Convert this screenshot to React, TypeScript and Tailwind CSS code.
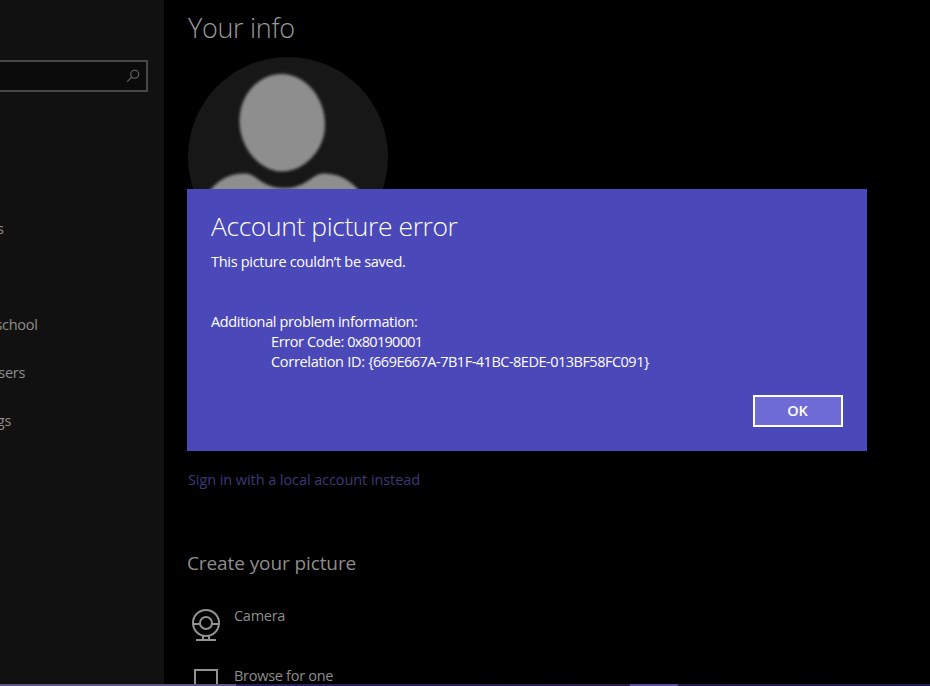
import type { ReactNode } from "react";

// Right edge of each label; the window is scrolled off to the left, so labels are cut there.
const NAV_ITEMS = [
  { label: "s", width: "w-[3.500px]", gap: "mb-[72px]" },
  { label: "school", width: "w-[37.500px]", gap: "mb-6" },
  { label: "sers", width: "w-[25px]", gap: "mb-6" },
  { label: "gs", width: "w-[11px]", gap: "" },
];

function SearchIcon() {
  return (
    <svg width="14" height="14" viewBox="0 0 14 14" fill="none" stroke="#6b6b6b" strokeWidth="1.1">
      <circle cx="8.7" cy="5.2" r="4" />
      <path d="M5.800 8.100 1.200 12.700" />
    </svg>
  );
}

function WebcamIcon() {
  return (
    <svg width="28" height="33" viewBox="0 0 28 33" fill="none" stroke="#929292" strokeWidth="2">
      <circle cx="14" cy="14" r="13" />
      <circle cx="14" cy="14" r="6" />
      <path d="M1 15h7M20 15h7M11 27v4M17 27v4M4 31h20" />
    </svg>
  );
}

function Avatar() {
  return (
    <svg width="200" height="200" viewBox="0 0 200 200" className="block">
      <defs>
        <filter id="soft">
          <feGaussianBlur stdDeviation="1.8" />
        </filter>
        <clipPath id="disc">
          <circle cx="100" cy="100" r="100" />
        </clipPath>
      </defs>
      <circle cx="100" cy="100" r="100" fill="#171717" />
      <g clipPath="url(#disc)">
        <g filter="url(#soft)" fill="#8e8e8e">
          <path d="M94 17C115 17 137 38 137 68C137 94 115 114.500 94 114.500C73 114.500 51.500 92 51.500 64C51.500 37 71 17 94 17Z" />
          <path d="M8 160C16 140 27 116.500 57 116.500C69 116.500 73 131 96 131C119 131 124 116.500 136 116.500C157 116.500 173 130 188 160V200H8Z" />
        </g>
      </g>
    </svg>
  );
}

function Sidebar() {
  return (
    <aside className="w-[164px] shrink-0 bg-[#111111] pt-[60px]">
      <div className="flex h-8 w-[148px] items-center justify-end border-y-2 border-r-2 border-[#484848] bg-[#0b0b0b] pr-[6px]">
        <SearchIcon />
      </div>
      <nav className="mt-[125px] flex flex-col text-[14.500px] leading-6 text-[#8d8d8d]">
        {NAV_ITEMS.map((item) => (
          <div key={item.label} className={`${item.width} ${item.gap} flex justify-end overflow-hidden`}>
            <span className="tracking-[-0.3px]">{item.label}</span>
          </div>
        ))}
      </nav>
    </aside>
  );
}

function PictureSource({ icon, children }: { icon: ReactNode; children: ReactNode }) {
  return (
    <div className="flex h-[60px] text-[14.500px] leading-5 text-[#8d8d8d]">
      <div className="flex w-[46px] shrink-0 pl-1 pt-[3px]">{icon}</div>
      <span className="whitespace-nowrap tracking-[-0.28px]">{children}</span>
    </div>
  );
}

function ErrorDialog() {
  return (
    <div
      role="dialog"
      className="absolute left-[187px] top-[189px] flex h-[262px] w-[680px] flex-col bg-[#4b48b9] px-6 pb-6 pt-[19px] text-white"
    >
      <h2 className="whitespace-nowrap text-[26.500px] font-light leading-9 tracking-[-0.42px]">
        Account picture error
      </h2>
      <div className="mt-[8px] whitespace-nowrap text-[14.500px] leading-5">
        <p className="tracking-[-0.3px]">This picture couldn’t be saved.</p>
        <p className="mt-10 tracking-[-0.36px]">Additional problem information:</p>
        <p className="pl-[60px] tracking-[-0.7px]">
          <span className="tracking-[-0.38px]">Error Code: </span>0x80190001
        </p>
        <p className="pl-[60px] tracking-[-0.5px]">
          <span className="tracking-[-0.3px]">Correlation ID: </span>
          {"{669E667A-7B1F-41BC-8EDE-013BF58FC091}"}
        </p>
      </div>
      <button className="mt-auto h-8 w-[90px] self-end border-2 border-white bg-[#6e6bd6] pr-px text-[14.500px] font-semibold leading-7 tracking-[-0.2px]">
        OK
      </button>
    </div>
  );
}

export default function App() {
  return (
    <div className="relative flex h-[686px] w-[930px] flex-col overflow-hidden bg-black font-['Open_Sans',sans-serif]">
      <div className="flex h-[684px] shrink-0 overflow-hidden">
        <Sidebar />
        <main className="flex-1 pl-[24px]">
          <h1 className="mt-[10px] whitespace-nowrap text-[27px] font-light leading-9 tracking-[-0.3px] text-[#9a9a9a]">
            Your info
          </h1>
          <div className="mt-[11px]">
            <Avatar />
          </div>
          <a className="mt-[213px] block whitespace-nowrap text-[14.500px] leading-5 tracking-[-0.08px] text-[#3b3977]">
            Sign in with a local account instead
          </a>
          <h2 className="-ml-px mt-[59px] whitespace-nowrap text-[19px] leading-7 tracking-[-0.1px] text-[#8d8d8d]">
            Create your picture
          </h2>
          <div className="mt-[29px]">
            <PictureSource icon={<WebcamIcon />}>Camera</PictureSource>
            <PictureSource icon={<div className="ml-[2px] h-6 w-6 border-2 border-[#929292]" />}>
              Browse for one
            </PictureSource>
          </div>
        </main>
      </div>
      <div className="flex h-[2px] shrink-0">
        <div className="w-[236px] bg-[#5c5680]" />
        <div className="w-[394px] bg-linear-to-r from-[#25225c] to-[#2c1e45]" />
        <div className="w-[48px] bg-[#584a9c]" />
        <div className="flex-1 bg-linear-to-r from-[#271c45] to-[#1b1e4c]" />
      </div>
      <ErrorDialog />
    </div>
  );
}
